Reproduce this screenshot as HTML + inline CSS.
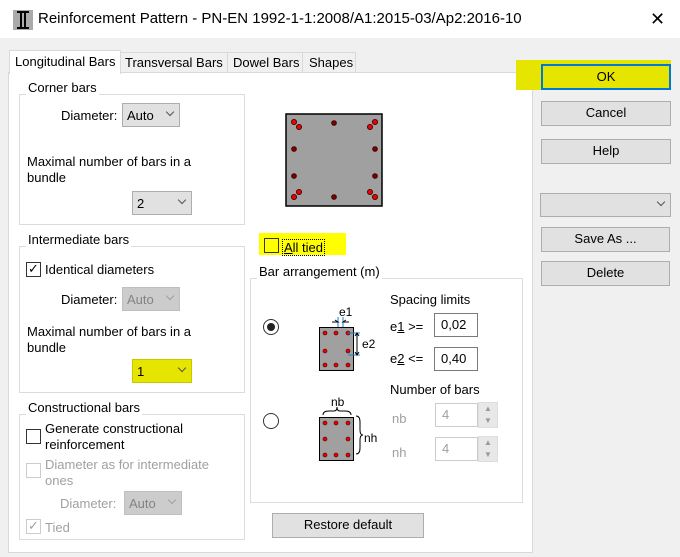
<!DOCTYPE html>
<html><head><meta charset="utf-8"><style>
*{box-sizing:border-box;margin:0;padding:0}
body{width:680px;height:557px;background:#f0f0f0;font-family:"Liberation Sans",sans-serif;font-size:13px;color:#000;position:relative;overflow:hidden}
.a{position:absolute}
.t{position:absolute;white-space:nowrap;line-height:15px}
.g{position:absolute;border:1px solid #dcdcdc}
.lg{position:absolute;background:#fff;padding:0 2px;line-height:15px;white-space:nowrap}
.cb{position:absolute;background:#e1e1e1;border:1px solid #adadad}
.cb span{position:absolute;left:4px;top:4px}
.cb i{position:absolute;right:6px;top:5px;width:6px;height:6px;border-right:1px solid #555;border-bottom:1px solid #555;transform:rotate(45deg)}
.dis{background:#ccc;border-color:#bfbfbf;color:#838383}
.dis i{border-color:#a0a0a0}
.chk{position:absolute;width:15px;height:15px;border:1px solid #333;background:#fff}
.btn{position:absolute;background:#e1e1e1;border:1px solid #adadad;text-align:center;line-height:22px}
.in{position:absolute;background:#fff;border:1px solid #7a7a7a;padding-left:6px;line-height:22px}
.gr{color:#a0a0a0}
</style></head><body>
<div class="a" style="left:0;top:0;width:680px;height:38px;background:#fff"></div>
<div class="a" style="left:13px;top:10px;width:20px;height:20px;background:#aaa"></div>
<div class="a" style="left:20px;top:11px;width:6px;height:18px;border-left:2px solid #000;border-right:2px solid #000"></div>
<div class="a" style="left:17px;top:11px;width:12px;height:2px;background:#000"></div>
<div class="a" style="left:17px;top:27px;width:12px;height:2px;background:#000"></div>
<div class="t" style="left:38px;top:10px;font-size:15px;line-height:18px">Reinforcement Pattern - PN-EN 1992-1-1:2008/A1:2015-03/Ap2:2016-10</div>
<div class="t" style="left:650px;top:9px;font-size:18px;line-height:20px">✕</div>

<div class="a" style="left:8px;top:72px;width:525px;height:481px;background:#fff;border:1px solid #d9d9d9"></div>
<div class="a" style="left:120px;top:52px;width:236px;height:21px;background:#f0f0f0;border:1px solid #d9d9d9"></div>
<div class="a" style="left:227px;top:52px;width:1px;height:20px;background:#d9d9d9"></div>
<div class="a" style="left:302px;top:52px;width:1px;height:20px;background:#d9d9d9"></div>
<div class="a" style="left:9px;top:50px;width:112px;height:24px;background:#fff;border:1px solid #d9d9d9;border-bottom:none"></div>
<div class="t" style="left:15px;top:54px">Longitudinal Bars</div>
<div class="t" style="left:125px;top:55px">Transversal Bars</div>
<div class="t" style="left:233px;top:55px">Dowel Bars</div>
<div class="t" style="left:309px;top:55px">Shapes</div>

<div class="g" style="left:19px;top:94px;width:226px;height:131px"></div>
<div class="lg" style="left:26px;top:80px">Corner bars</div>
<div class="t" style="left:61px;top:108px">Diameter:</div>
<div class="cb" style="left:122px;top:103px;width:58px;height:24px"><span>Auto</span><i></i></div>
<div class="t" style="left:27px;top:154px">Maximal number of bars in a</div>
<div class="t" style="left:27px;top:170px">bundle</div>
<div class="cb" style="left:132px;top:191px;width:60px;height:24px"><span>2</span><i></i></div>

<svg class="a" style="left:285px;top:113px" width="99" height="95">
<rect x="1" y="1" width="96" height="92" fill="#a0a0a0" stroke="#000" stroke-width="1.5"/>
<g fill="#e00" stroke="#300" stroke-width=".8"><circle cx="9" cy="9" r="2.6"/><circle cx="14" cy="14" r="2.6"/><circle cx="90" cy="9" r="2.6"/><circle cx="85" cy="14" r="2.6"/><circle cx="9" cy="84" r="2.6"/><circle cx="14" cy="79" r="2.6"/><circle cx="90" cy="84" r="2.6"/><circle cx="85" cy="79" r="2.6"/></g>
<g fill="#700" stroke="#300" stroke-width=".8"><circle cx="49" cy="10" r="2.4"/><circle cx="49" cy="84" r="2.4"/><circle cx="9" cy="36" r="2.4"/><circle cx="9" cy="63" r="2.4"/><circle cx="90" cy="36" r="2.4"/><circle cx="90" cy="63" r="2.4"/></g>
</svg>

<div class="g" style="left:19px;top:246px;width:226px;height:147px"></div>
<div class="lg" style="left:26px;top:232px">Intermediate bars</div>
<div class="chk" style="left:26px;top:262px"></div>
<div class="t" style="left:28px;top:261px;font-size:13px">✓</div>
<div class="t" style="left:45px;top:262px">Identical diameters</div>
<div class="t" style="left:61px;top:292px">Diameter:</div>
<div class="cb dis" style="left:122px;top:287px;width:58px;height:24px"><span>Auto</span><i></i></div>
<div class="t" style="left:27px;top:324px">Maximal number of bars in a</div>
<div class="t" style="left:27px;top:340px">bundle</div>
<div class="cb" style="left:132px;top:359px;width:60px;height:24px;background:#e5e500;border-color:#c8c800"><span>1</span><i></i></div>

<div class="g" style="left:19px;top:414px;width:226px;height:126px"></div>
<div class="lg" style="left:26px;top:400px">Constructional bars</div>
<div class="chk" style="left:26px;top:429px"></div>
<div class="t" style="left:45px;top:421px">Generate constructional</div>
<div class="t" style="left:45px;top:437px">reinforcement</div>
<div class="chk" style="left:26px;top:463px;border-color:#ccc"></div>
<div class="t gr" style="left:45px;top:457px">Diameter as for intermediate</div>
<div class="t gr" style="left:45px;top:473px">ones</div>
<div class="t gr" style="left:60px;top:496px">Diameter:</div>
<div class="cb dis" style="left:124px;top:491px;width:58px;height:24px"><span>Auto</span><i></i></div>
<div class="chk" style="left:26px;top:519px;border-color:#ccc"></div>
<div class="t gr" style="left:28px;top:518px;font-size:13px">✓</div>
<div class="t gr" style="left:45px;top:520px">Tied</div>

<div class="a" style="left:259px;top:233px;width:87px;height:22px;background:#ffff00"></div>
<div class="chk" style="left:264px;top:238px;background:transparent"></div>
<div class="t" style="left:282px;top:239px;border:1px dotted #000;padding:0 1px"><u>A</u>ll tied</div>

<div class="g" style="left:250px;top:278px;width:273px;height:225px"></div>
<div class="lg" style="left:257px;top:264px">Bar arrangement (m)</div>
<div class="a" style="left:263px;top:319px;width:16px;height:16px;border:1px solid #333;border-radius:50%;background:#fff"></div>
<div class="a" style="left:267px;top:323px;width:8px;height:8px;border-radius:50%;background:#222"></div>
<div class="a" style="left:263px;top:413px;width:16px;height:16px;border:1px solid #333;border-radius:50%;background:#fff"></div>
<svg class="a" style="left:310px;top:303px" width="75" height="160" font-family="Liberation Sans" font-size="12">
<rect x="9.5" y="24.5" width="34" height="43" fill="#a0a0a0" stroke="#000"/>
<g fill="#e00" stroke="#300" stroke-width=".6"><circle cx="15" cy="30" r="2"/><circle cx="26" cy="30" r="2"/><circle cx="38" cy="30" r="2"/><circle cx="15" cy="48" r="2"/><circle cx="38" cy="48" r="2"/><circle cx="15" cy="62" r="2"/><circle cx="26" cy="62" r="2"/><circle cx="38" cy="62" r="2"/></g>
<path d="M28 24V14M33 24V14M38 30h12M38 52h12" stroke="#1a7fd4" fill="none"/>
<path d="M22 19h6l-3-2M39 19h-6l3-2M47 31v20M45 33l2-3 2 3M45 49l2 3 2-3" stroke="#000" fill="none"/>
<text x="29" y="13">e1</text><text x="52" y="45">e2</text>
<rect x="9.5" y="114.5" width="34" height="43" fill="#a0a0a0" stroke="#000"/>
<g fill="#e00" stroke="#300" stroke-width=".6"><circle cx="15" cy="120" r="2"/><circle cx="26" cy="120" r="2"/><circle cx="38" cy="120" r="2"/><circle cx="15" cy="136" r="2"/><circle cx="38" cy="136" r="2"/><circle cx="15" cy="152" r="2"/><circle cx="26" cy="152" r="2"/><circle cx="38" cy="152" r="2"/></g>
<path d="M13 112q0-4 6-4h5q3 0 3-4q0 4 3 4h5q6 0 6 4M46 113q4 0 4 6v8q0 5 3 5q-3 0-3 5v8q0 6-4 6" stroke="#000" fill="none"/>
<text x="21" y="103">nb</text><text x="54" y="139">nh</text>
</svg>
<div class="t" style="left:390px;top:292px">Spacing limits</div>
<div class="t" style="left:390px;top:319px">e<u>1</u> &gt;=</div>
<div class="in" style="left:434px;top:313px;width:44px;height:24px">0,02</div>
<div class="t" style="left:390px;top:351px">e<u>2</u> &lt;=</div>
<div class="in" style="left:434px;top:347px;width:44px;height:24px">0,40</div>
<div class="t" style="left:390px;top:382px">Number of bars</div>
<div class="t gr" style="left:392px;top:411px">nb</div>
<div class="in gr" style="left:435px;top:403px;width:43px;height:24px;border-color:#ccc">4</div>
<div class="a" style="left:478px;top:402px;width:20px;height:26px;background:#e8e8e8;border:1px solid #ddd;color:#999;font-size:8px;text-align:center;line-height:12px">▲<br>▼</div>
<div class="t gr" style="left:392px;top:445px">nh</div>
<div class="in gr" style="left:435px;top:437px;width:43px;height:24px;border-color:#ccc">4</div>
<div class="a" style="left:478px;top:436px;width:20px;height:26px;background:#e8e8e8;border:1px solid #ddd;color:#999;font-size:8px;text-align:center;line-height:12px">▲<br>▼</div>

<div class="btn" style="left:272px;top:513px;width:152px;height:25px">Restore default</div>

<div class="a" style="left:516px;top:60px;width:155px;height:30px;background:#e5e500"></div>
<div class="btn" style="left:541px;top:64px;width:130px;height:26px;background:#e5e500;border:2px solid #0078d7;line-height:21px">OK</div>
<div class="btn" style="left:541px;top:101px;width:130px;height:25px">Cancel</div>
<div class="btn" style="left:541px;top:139px;width:130px;height:25px">Help</div>
<div class="cb" style="left:540px;top:193px;width:131px;height:24px"><i></i></div>
<div class="btn" style="left:541px;top:227px;width:129px;height:25px">Save As ...</div>
<div class="btn" style="left:541px;top:261px;width:129px;height:25px">Delete</div>
</body></html>
